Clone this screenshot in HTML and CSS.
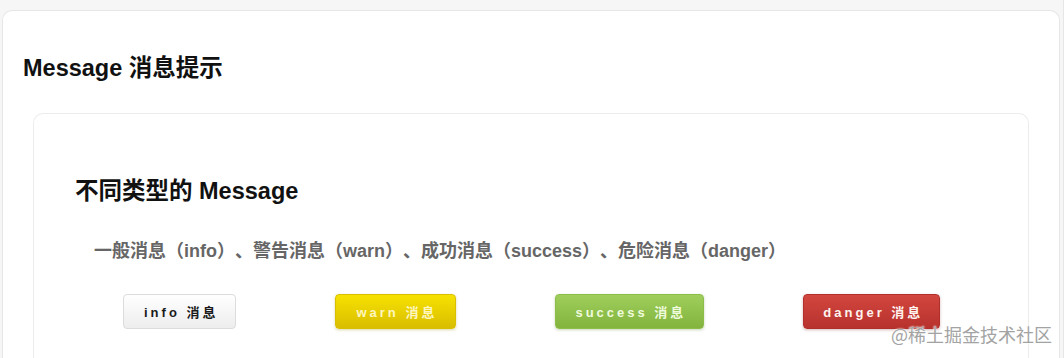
FILE: index.html
```html
<!DOCTYPE html>
<html lang="zh">
<head>
<meta charset="utf-8">
<title>Message 消息提示</title>
<link rel="stylesheet" href="styles.css">
</head>
<body>
<div class="page">
  <section class="outer-card">
    <h1 class="title">Message 消息提示</h1>
    <div class="inner-card">
      <h2 class="subtitle">不同类型的 Message</h2>
      <p class="desc">一般消息（info）、警告消息（warn）、成功消息（success）、危险消息（danger）</p>
      <div class="btn-row">
        <button class="btn btn-info">info 消息</button>
        <button class="btn btn-warn">warn 消息</button>
        <button class="btn btn-success">success 消息</button>
        <button class="btn btn-danger">danger 消息</button>
      </div>
    </div>
  </section>
  <div class="watermark">@稀土掘金技术社区</div>
</div>
</body>
</html>
```

FILE: styles.css
```css
* { box-sizing: border-box; }
html, body {
  margin: 0;
  padding: 0;
  height: 358px;
  overflow: hidden;
}
body {
  background: #f6f6f6;
  font-family: "Liberation Sans", "Noto Sans CJK SC", sans-serif;
  color: #111;
}
.page {
  position: relative;
  height: 358px;
  overflow: hidden;
  padding: 10px 3px 0 2px;
  border-right: 1px solid #e6e6e6;
}
.outer-card {
  background: #fff;
  border: 1px solid #e6e6e6;
  border-bottom: none;
  border-radius: 10px 10px 0 0;
  height: 348px;
  padding: 42px 0 0 20px;
}
.title {
  margin: 0;
  font-size: 23.5px;
  font-weight: bold;
  line-height: 30px;
  color: #111;
}
.inner-card {
  margin: 30px 30px 0 10px;
  border: 1px solid #ececec;
  border-bottom: none;
  border-radius: 10px 10px 0 0;
  height: 245px;
  padding: 62px 0 0 41px;
}
.subtitle {
  margin: 0;
  font-size: 23.5px;
  font-weight: bold;
  line-height: 30px;
  color: #111;
}
.desc {
  margin: 33px 0 0 19px;
  font-size: 18px;
  line-height: 24px;
  font-weight: 600;
  color: #666;
  text-spacing-trim: space-all;
}
.btn-row {
  display: flex;
  gap: 99px;
  margin: 31px 0 0 48px;
}
.btn {
  height: 35px;
  padding: 0 17px 0 20px;
  border-radius: 4px;
  font-family: "Liberation Sans", "Noto Sans CJK SC", sans-serif;
  font-size: 13px;
  font-weight: bold;
  letter-spacing: 3px;
  cursor: pointer;
}
.btn-info {
  background: linear-gradient(#ffffff, #ededed);
  border: 1px solid #dcdcdc;
  color: #1a1a1a;
}
.btn-warn {
  background: linear-gradient(#f6e200, #d9bd00);
  border: 1px solid #d8c000;
  color: #fff6c0;
  box-shadow: 0 1px 3px rgba(160, 140, 0, 0.35);
  padding: 0 18px 0 20px;
}
.btn-success {
  background: linear-gradient(#9fce5c, #83b43e);
  border: 1px solid #8cbd48;
  color: #eefbdc;
  box-shadow: 0 1px 3px rgba(80, 120, 30, 0.3);
  padding: 0 17px 0 19px;
}
.btn-danger {
  background: linear-gradient(#d2463f, #b8322d);
  border: 1px solid #b2302b;
  color: #fff3f0;
  box-shadow: 0 1px 3px rgba(120, 20, 20, 0.3);
  padding: 0 16px 0 19px;
}
.watermark {
  position: absolute;
  left: 891px;
  top: 321px;
  font-size: 18px;
  line-height: 26px;
  white-space: nowrap;
  color: #a3a3a3;
  text-shadow: 0 0 2px #fff, 0 0 2px #fff;
  font-family: "Noto Sans CJK SC", sans-serif;
}
```
